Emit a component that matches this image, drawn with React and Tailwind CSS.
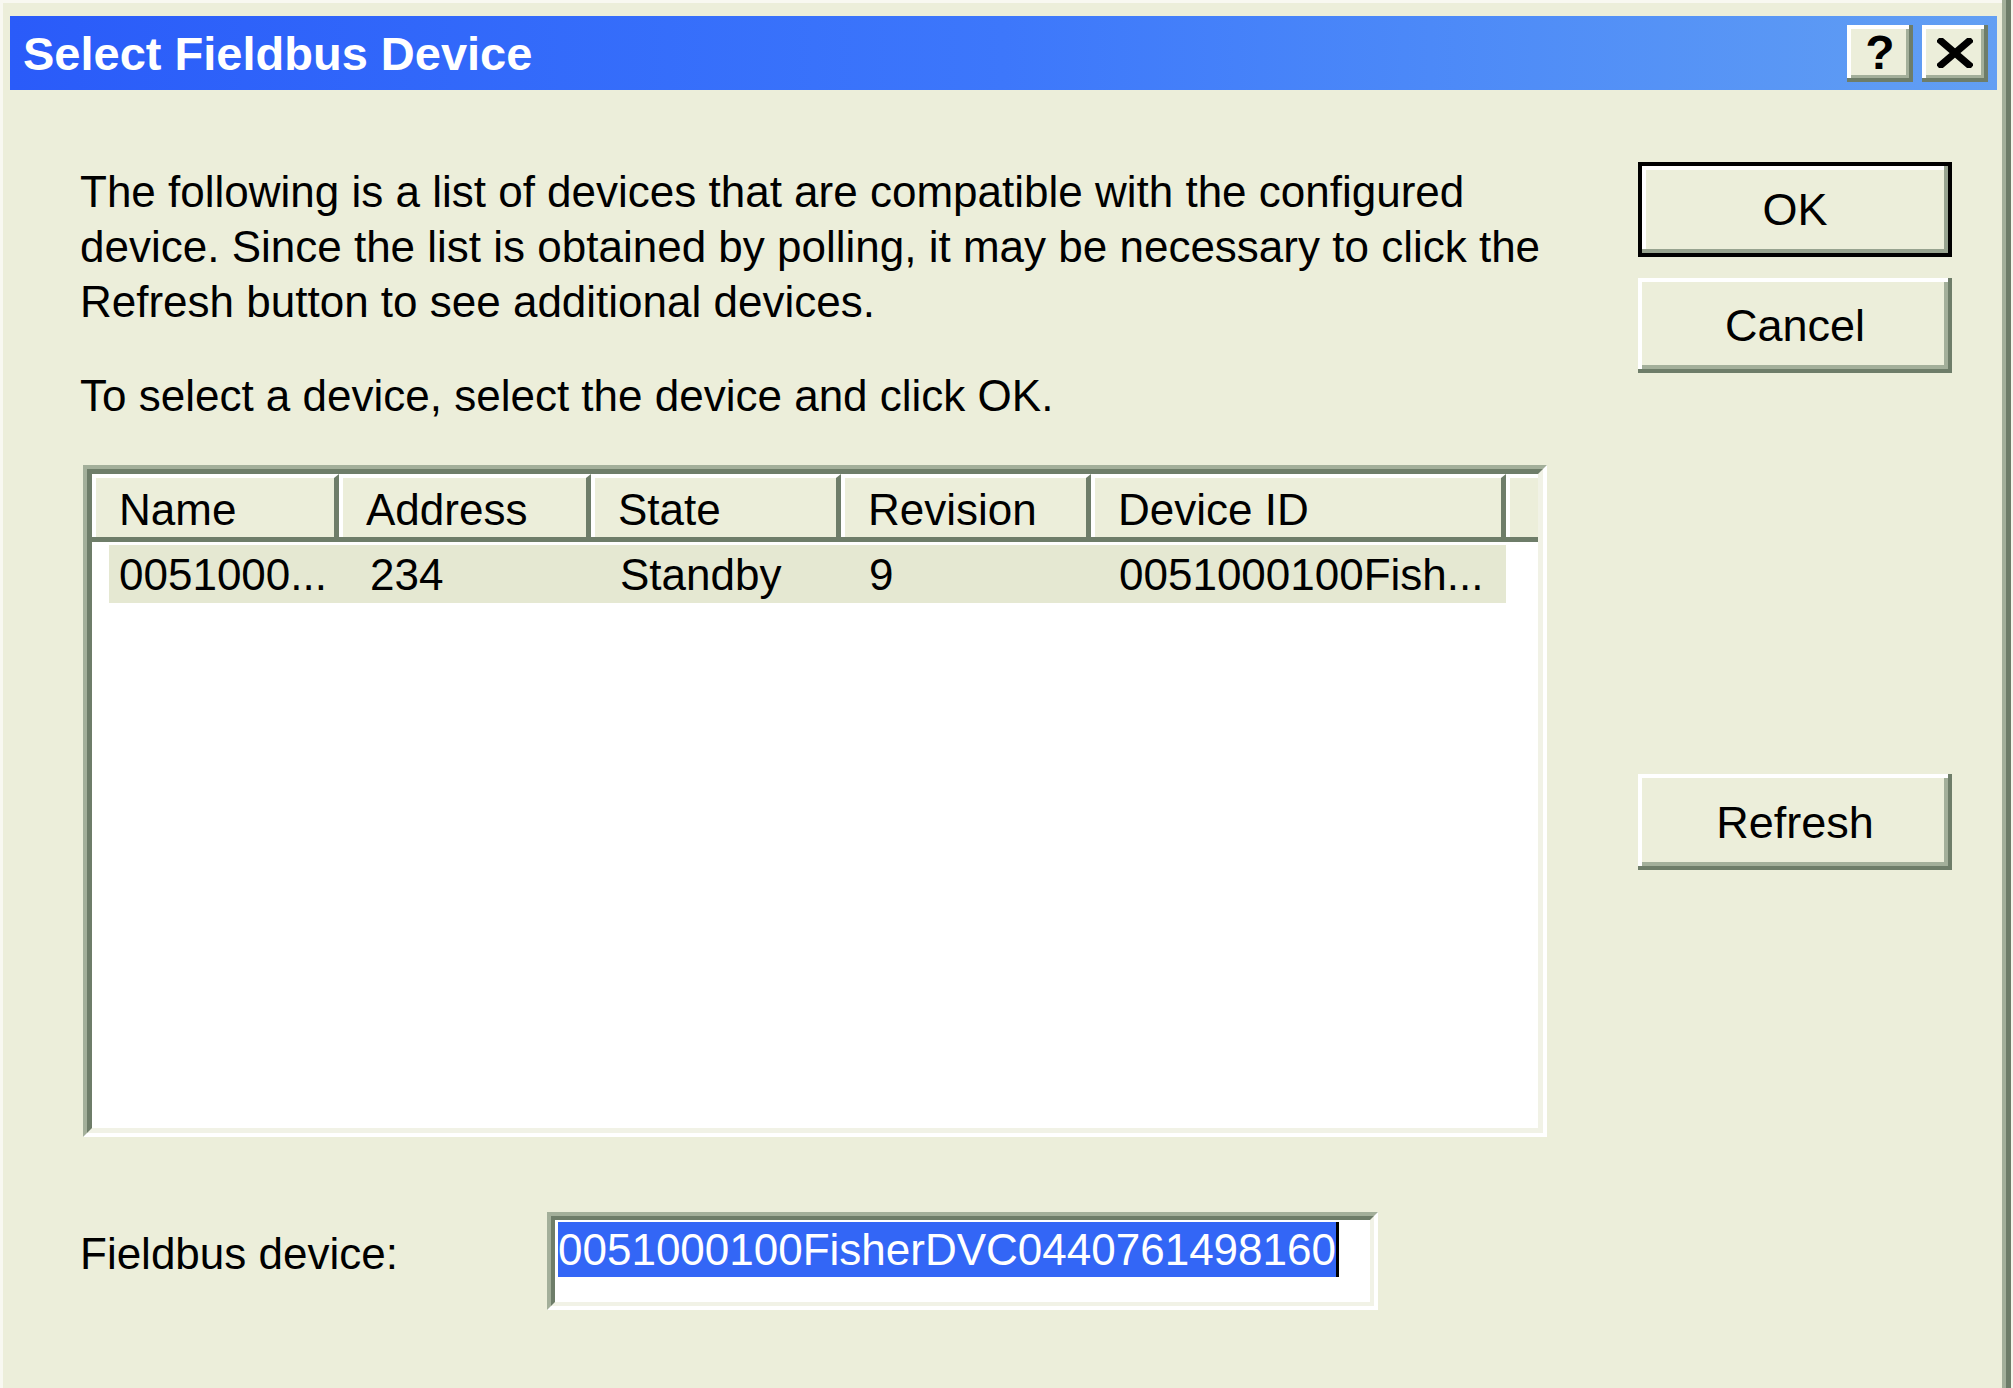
import React from "react";

const columns = [
  { label: "Name", width: "w-[247px]" },
  { label: "Address", width: "w-[252px]" },
  { label: "State", width: "w-[250px]" },
  { label: "Revision", width: "w-[250px]" },
  { label: "Device ID", width: "w-[415px]" },
];

const deviceRow = [
  { text: "0051000...", cls: "w-[230px] pl-[10px]" },
  { text: "234", cls: "w-[252px] pl-[31px]" },
  { text: "Standby", cls: "w-[250px] pl-[29px]" },
  { text: "9", cls: "w-[250px] pl-[28px]" },
  { text: "0051000100Fish...", cls: "w-[415px] pl-[28px]" },
];

function CaptionButton({ children }) {
  return (
    <div className="w-[66px] h-[57px] bg-[#eceeda] flex items-center justify-center shadow-[inset_-4px_-4px_0_#6e7d69,inset_4px_4px_0_#ffffff,inset_-7px_-7px_0_#a3af9a]">
      {children}
    </div>
  );
}

function PushButton({ label, isDefault, className = "" }) {
  const face = (
    <div
      className={
        isDefault
          ? "h-full flex items-center justify-center shadow-[inset_-4px_-4px_0_#97a38f,inset_4px_4px_0_#ffffff]"
          : "h-full flex items-center justify-center shadow-[inset_-4px_-4px_0_#6e7d69,inset_4px_4px_0_#ffffff,inset_-8px_-8px_0_#a3af9a]"
      }
    >
      <span className="text-[45px] leading-none text-black">{label}</span>
    </div>
  );
  return (
    <div
      className={`w-[314px] bg-[#eceeda] ${isDefault ? "border-[4px] border-black" : ""} ${className}`}
    >
      {face}
    </div>
  );
}

function DeviceList() {
  return (
    <div className="ml-[3px] mt-[42px] w-[1464px] h-[672px] border-[4px] border-t-[#a3af9a] border-l-[#a3af9a] border-r-white border-b-white">
      <div className="h-full border-[5px] border-t-[#6e7d69] border-l-[#6e7d69] border-r-[#f1f2e6] border-b-[#f1f2e6] bg-white">
        {/* column headers */}
        <div className="flex h-[68px] border-b-[5px] border-b-[#6e7d69] bg-[#eceeda]">
          {columns.map((col) => (
            <div
              key={col.label}
              className={`${col.width} h-full flex items-center pl-[23px] pt-[4px] border-l-[4px] border-t-[4px] border-r-[5px] border-l-white border-t-white border-r-[#6e7d69] text-[44px] leading-none whitespace-nowrap`}
            >
              {col.label}
            </div>
          ))}
          <div className="flex-1 h-full border-l-[4px] border-t-[4px] border-l-white border-t-white" />
        </div>

        {/* selected row (list not focused) */}
        <div className="mt-[3px] ml-[17px] w-[1397px] h-[58px] flex items-center bg-[#e5e8d2] text-[44px] leading-[55px] whitespace-nowrap">
          {deviceRow.map((cell) => (
            <div key={cell.text} className={cell.cls}>
              {cell.text}
            </div>
          ))}
        </div>
      </div>
    </div>
  );
}

export default function App() {
  return (
    <div className="w-[2013px] h-[1388px] flex overflow-hidden bg-[#f6f7ee] font-['Liberation_Sans',Arial,sans-serif] text-black">
      <div className="w-[2002px] h-full bg-[#eceeda] shadow-[inset_3px_3px_0_#f8f8f1]">
        {/* title bar */}
        <div className="ml-[10px] mt-[16px] w-[1987px] h-[74px] flex items-center bg-linear-to-r from-[#2a5bf9] via-[#3d77fb] to-[#629ff3]">
          <span className="pl-[13px] text-[47px] font-bold leading-none text-white whitespace-nowrap">
            Select Fieldbus Device
          </span>
          <div className="ml-auto mr-[9px] flex gap-[9px]">
            <CaptionButton>
              <span className="text-[48px] font-bold leading-none text-black">?</span>
            </CaptionButton>
            <CaptionButton>
              <svg width="36" height="30" viewBox="0 0 36 30">
                <path d="M4 3 L32 27 M32 3 L4 27" stroke="#000" strokeWidth="7" strokeLinecap="square" />
              </svg>
            </CaptionButton>
          </div>
        </div>

        <div className="flex pl-[80px]">
          {/* left column */}
          <div className="w-[1467px]">
            <p className="mt-[74px] text-[44px] leading-[55px] whitespace-nowrap">
              The following is a list of devices that are compatible with the configured
              <br />
              device. Since the list is obtained by polling, it may be necessary to click the
              <br />
              Refresh button to see additional devices.
            </p>
            <p className="mt-[39px] text-[44px] leading-[55px] whitespace-nowrap">
              To select a device, select the device and click OK.
            </p>

            <DeviceList />

            <div className="mt-[75px] flex items-start">
              <div className="w-[467px] mt-[14px] text-[44px] leading-[55px] whitespace-nowrap">
                Fieldbus device:
              </div>
              <div className="w-[831px] h-[98px] border-[4px] border-t-[#a3af9a] border-l-[#a3af9a] border-r-white border-b-white">
                <div className="h-full border-[4px] border-t-[#6e7d69] border-l-[#6e7d69] border-r-[#f1f2e6] border-b-[#f1f2e6] bg-white pl-[3px] pt-[2px]">
                  <div className="flex items-start whitespace-nowrap">
                    <span className="bg-[#3366f6] text-white text-[44px] leading-[55px]">
                      0051000100FisherDVC0440761498160
                    </span>
                    <span className="w-[3px] h-[55px] bg-black" />
                  </div>
                </div>
              </div>
            </div>
          </div>

          {/* right column buttons */}
          <div className="ml-[91px] flex flex-col">
            <PushButton label="OK" isDefault className="mt-[72px] h-[95px]" />
            <PushButton label="Cancel" className="mt-[21px] h-[95px]" />
            <PushButton label="Refresh" className="mt-[401px] h-[96px]" />
          </div>
        </div>
      </div>

      {/* right window frame */}
      <div className="w-[4px] h-full bg-[#a3af9a]" />
      <div className="w-[5px] h-full bg-[#6e7d69]" />
      <div className="flex-1 h-full bg-[#f4f5ea]" />
    </div>
  );
}
